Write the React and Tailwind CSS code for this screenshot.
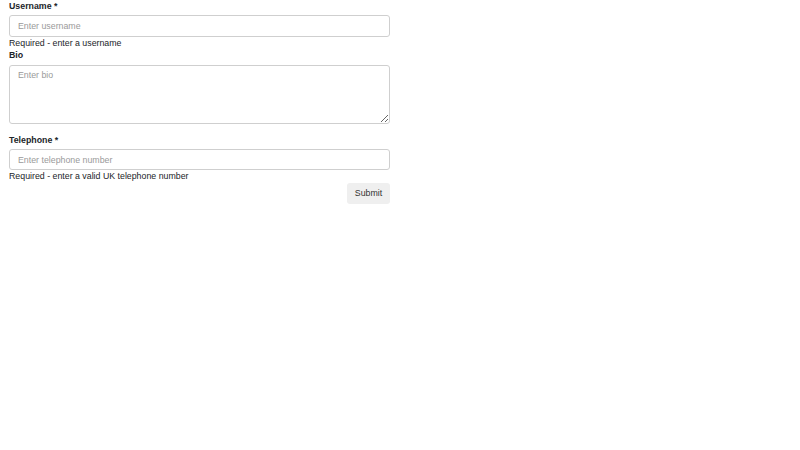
export default function App() {
    return (
        <div className="w-[800px] h-[450px] bg-white font-['Liberation_Sans',Arial,sans-serif] text-[8.8px] text-[#212529]">
            <form className="w-[381px] ml-[9px] flex flex-col">
                <label className="font-bold leading-[13px] mb-[2px]">Username *</label>
                <input
                    type="text"
                    placeholder="Enter username"
                    className="h-[22px] rounded-[3px] border border-[#cfcfcf] px-[8px] text-[8.8px] placeholder:text-[#9a9a9a] outline-none"
                />
                <div className="leading-[13px]">Required - enter a username</div>

                <label className="font-bold leading-[13px] mb-[2px] -mt-[1px]">Bio</label>
                <textarea
                    placeholder="Enter bio"
                    className="h-[59px] mt-[1px] rounded-[3px] border border-[#cfcfcf] px-[8px] pt-[3px] leading-[13px] text-[8.8px] placeholder:text-[#9a9a9a] outline-none resize-y"
                />

                <label className="font-bold leading-[13px] mt-[10px] mb-[2px]">Telephone *</label>
                <input
                    type="text"
                    placeholder="Enter telephone number"
                    className="h-[21px] rounded-[3px] border border-[#cfcfcf] px-[8px] text-[8.8px] placeholder:text-[#9a9a9a] outline-none"
                />
                <div className="leading-[13px]">Required - enter a valid UK telephone number</div>

                <div className="flex justify-end">
                    <button
                        type="button"
                        className="h-[21px] w-[43px] rounded-[3px] bg-[#efefef] text-[8.8px] text-[#333]"
                    >
                        Submit
                    </button>
                </div>
            </form>
        </div>
    )
}
